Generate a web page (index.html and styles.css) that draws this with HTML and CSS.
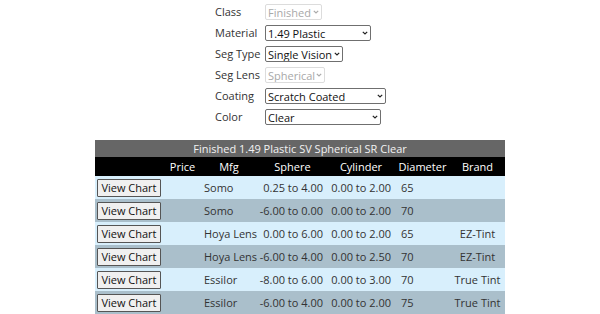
FILE: index.html
```html
<!DOCTYPE html>
<html>
<head>
<meta charset="utf-8">
<link rel="stylesheet" href="styles.css">
</head>
<body>
<div class="page">
  <div class="form">
    <label class="lbl">Class</label>
    <div class="selwrap w-class dis"><select class="sel" disabled><option>Finished</option></select><svg class="chev" viewBox="0 0 6 4" width="6" height="4"><path d="M0.8 0.8 L3 3 L5.2 0.8" fill="none" stroke="currentColor" stroke-width="1.2"/></svg></div>
    <label class="lbl">Material</label>
    <div class="selwrap w-material"><select class="sel"><option>1.49 Plastic</option></select><svg class="chev" viewBox="0 0 6 4" width="6" height="4"><path d="M0.8 0.8 L3 3 L5.2 0.8" fill="none" stroke="currentColor" stroke-width="1.2"/></svg></div>
    <label class="lbl">Seg Type</label>
    <div class="selwrap w-segtype"><select class="sel"><option>Single Vision</option></select><svg class="chev" viewBox="0 0 6 4" width="6" height="4"><path d="M0.8 0.8 L3 3 L5.2 0.8" fill="none" stroke="currentColor" stroke-width="1.2"/></svg></div>
    <label class="lbl">Seg Lens</label>
    <div class="selwrap w-seglens dis"><select class="sel" disabled><option>Spherical</option></select><svg class="chev" viewBox="0 0 6 4" width="6" height="4"><path d="M0.8 0.8 L3 3 L5.2 0.8" fill="none" stroke="currentColor" stroke-width="1.2"/></svg></div>
    <label class="lbl">Coating</label>
    <div class="selwrap w-coating"><select class="sel"><option>Scratch Coated</option></select><svg class="chev" viewBox="0 0 6 4" width="6" height="4"><path d="M0.8 0.8 L3 3 L5.2 0.8" fill="none" stroke="currentColor" stroke-width="1.2"/></svg></div>
    <label class="lbl">Color</label>
    <div class="selwrap w-color"><select class="sel"><option>Clear</option></select><svg class="chev" viewBox="0 0 6 4" width="6" height="4"><path d="M0.8 0.8 L3 3 L5.2 0.8" fill="none" stroke="currentColor" stroke-width="1.2"/></svg></div>
  </div>

  <table class="lenses">
    <colgroup>
      <col class="c-btn"><col class="c-price"><col class="c-mfg"><col class="c-sph"><col class="c-cyl"><col class="c-dia"><col class="c-brand">
    </colgroup>
    <thead>
      <tr class="title"><th colspan="7">Finished 1.49 Plastic SV Spherical SR Clear</th></tr>
      <tr class="head"><th></th><th>Price</th><th>Mfg</th><th>Sphere</th><th>Cylinder</th><th>Diameter</th><th>Brand</th></tr>
    </thead>
    <tbody>
      <tr class="odd"><td><button class="btn">View Chart</button></td><td></td><td class="mfg">Somo</td><td class="sph">0.25 to 4.00</td><td class="cyl">0.00 to 2.00</td><td class="dia">65</td><td class="brand"></td></tr>
      <tr class="even"><td><button class="btn">View Chart</button></td><td></td><td class="mfg">Somo</td><td class="sph">-6.00 to 0.00</td><td class="cyl">0.00 to 2.00</td><td class="dia">70</td><td class="brand"></td></tr>
      <tr class="odd"><td><button class="btn">View Chart</button></td><td></td><td class="mfg">Hoya Lens</td><td class="sph">0.00 to 6.00</td><td class="cyl">0.00 to 2.00</td><td class="dia">65</td><td class="brand">EZ-Tint</td></tr>
      <tr class="even"><td><button class="btn">View Chart</button></td><td></td><td class="mfg">Hoya Lens</td><td class="sph">-6.00 to 4.00</td><td class="cyl">0.00 to 2.50</td><td class="dia">70</td><td class="brand">EZ-Tint</td></tr>
      <tr class="odd"><td><button class="btn">View Chart</button></td><td></td><td class="mfg">Essilor</td><td class="sph">-8.00 to 6.00</td><td class="cyl">0.00 to 3.00</td><td class="dia">70</td><td class="brand">True Tint</td></tr>
      <tr class="even"><td><button class="btn">View Chart</button></td><td></td><td class="mfg">Essilor</td><td class="sph">-6.00 to 4.00</td><td class="cyl">0.00 to 2.00</td><td class="dia">75</td><td class="brand">True Tint</td></tr>
    </tbody>
  </table>
</div>
</body>
</html>
```

FILE: styles.css
```css
html, body {
  margin: 0;
  padding: 0;
  background: #ffffff;
}
body {
  font-family: "Open Sans", "Liberation Sans", sans-serif;
  font-size: 11px;
  color: #333333;
}
.page {
  display: flex;
  flex-direction: column;
  align-items: center;
  padding-top: 4px;
}
.form {
  display: grid;
  grid-template-columns: 50px auto;
  grid-auto-rows: 16px;
  row-gap: 5px;
  align-items: center;
  width: 170px;
}
.lbl {
  color: #333333;
  font-size: 11px;
  line-height: 16px;
}
.selwrap {
  position: relative;
  height: 16px;
  color: #222222;
}
.sel {
  -webkit-appearance: none;
  appearance: none;
  font-family: "Open Sans", "Liberation Sans", sans-serif;
  font-size: 11px;
  width: 100%;
  height: 16px;
  padding: 0 7px 0 2px;
  border: 1px solid #6f6f6f;
  border-radius: 2px;
  background: #ffffff;
  color: #111111;
  display: block;
  box-sizing: border-box;
}
.chev {
  position: absolute;
  right: 3px;
  top: 6px;
  pointer-events: none;
}
.dis { color: #aaaaaa; }
.dis .sel {
  color: #a8a8a8;
  border-color: #dcdcdc;
  background: #ffffff;
  opacity: 1;
}
.w-class { width: 57px; }
.w-material { width: 106px; }
.w-segtype { width: 78px; }
.w-seglens { width: 60px; }
.w-coating { width: 121px; }
.w-color { width: 116px; }

.lenses {
  margin-top: 15px;
  width: 410px;
  table-layout: fixed;
  border-collapse: collapse;
}
.c-btn { width: 70px; }
.c-price { width: 35px; }
.c-mfg { width: 58px; }
.c-sph { width: 69px; }
.c-cyl { width: 68px; }
.c-dia { width: 55px; }
.c-brand { width: 55px; }

.lenses th {
  font-weight: normal;
  padding: 0;
  white-space: nowrap;
}
.title th {
  background: #666666;
  color: #f2f2f2;
  height: 17px;
  text-align: center;
}
.head th {
  background: #000000;
  color: #ffffff;
  height: 19px;
  text-align: center;
}
.lenses td {
  padding: 0;
  height: 23px;
  white-space: nowrap;
}
.odd td { background: #d8effc; }
.even td { background: #aabfcb; }
.btn {
  font-family: "Open Sans", "Liberation Sans", sans-serif;
  font-size: 11px;
  color: #111111;
  width: 64px;
  height: 18px;
  margin-left: 2px;
  padding: 0;
  border: 1px solid #555555;
  border-radius: 1px;
  background: #f0f0f0;
  display: block;
}
.mfg { padding-left: 4px !important; text-align: left; }
.sph { text-align: right; padding-right: 4px !important; }
.cyl { text-align: right; padding-right: 4px !important; }
.dia { text-align: left; padding-left: 6px !important; }
.brand { text-align: center; }
```
